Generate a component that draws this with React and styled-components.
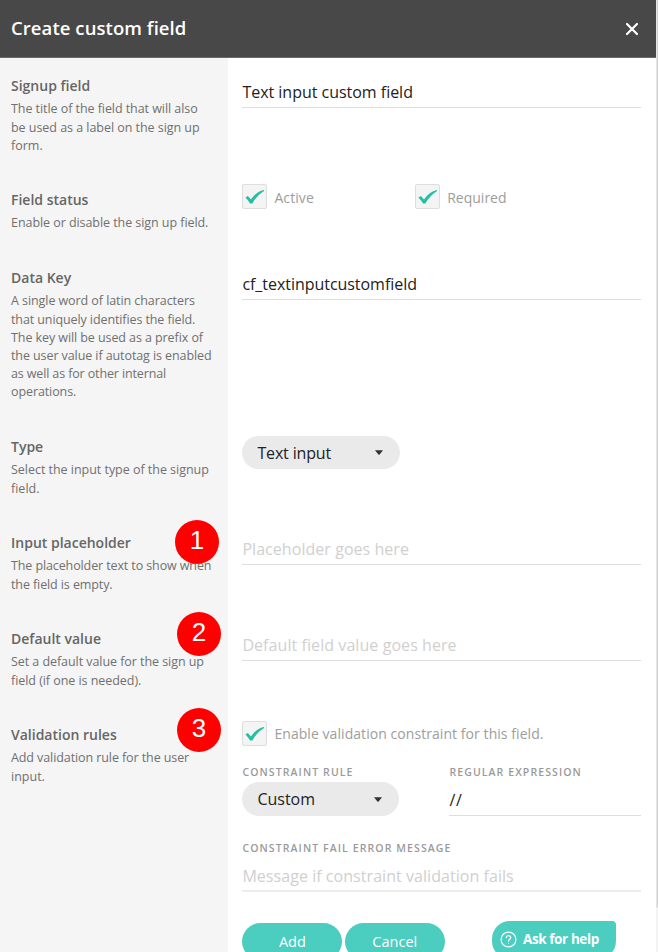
import React from "react";
import styled, { createGlobalStyle } from "styled-components";

const GlobalStyle = createGlobalStyle`
  * { box-sizing: border-box; }
  body { margin: 0; background: #fff; font-family: "Open Sans", "Noto Sans", sans-serif; }
`;

const Page = styled.div`
  width: 658px;
  height: 952px;
  overflow: hidden;
  display: grid;
  grid-template-columns: 656px 2px;
`;

const Panel = styled.main`
  height: 952px;
  overflow: hidden;
  background: linear-gradient(to right, #f5f5f5 228px, #fff 228px);
`;

const ScrollTrack = styled.div`
  height: 952px;
  background: #f3f3f3;
`;

const ScrollThumb = styled.div`
  height: 908px;
  background: #d2d2d2;
  border-left: 1px solid #e4e4e4;
  border-radius: 0 0 0 2px;
`;

const Header = styled.header`
  height: 58px;
  padding: 0 17px 0 11px;
  display: flex;
  align-items: center;
  justify-content: space-between;
  background: #484848;
  border-bottom: 1px solid #6c6666;
`;

const Title = styled.h1`
  margin: 0;
  padding-bottom: 2px;
  color: #fff;
  font-size: 18.5px;
  font-weight: 600;
  line-height: 24px;
  letter-spacing: 0.07px;
`;

const CloseButton = styled.button`
  display: flex;
  padding: 0;
  border: 0;
  background: none;
`;

const Row = styled.section`
  height: ${(p) => p.$height}px;
  display: grid;
  grid-template-columns: 228px 1fr;
`;

const Info = styled.div`
  position: relative;
  padding: 16px 0 0 11px;
`;

const InfoTitle = styled.h2`
  margin: 0 0 2.3px;
  color: #666;
  font-size: 14px;
  font-weight: 600;
  line-height: 24px;
`;

const InfoLine = styled.div`
  color: #707070;
  font-size: 12.5px;
  line-height: 18.2px;
  letter-spacing: ${(p) => p.$track || 0}px;
  white-space: nowrap;
`;

const Badge = styled.div`
  position: absolute;
  left: ${(p) => p.$left}px;
  top: ${(p) => p.$top}px;
  width: 44px;
  height: 44px;
  padding-bottom: 3px;
  display: flex;
  align-items: center;
  justify-content: center;
  border-radius: 50%;
  background: #fe0000;
  color: #fff;
  font: 26px/41px "Liberation Sans", Arial, sans-serif;
`;

const Content = styled.div`
  padding: ${(p) => p.$top}px 15px 0 14.4px;
`;

const Value = styled.div`
  height: ${(p) => p.$height || 31}px;
  border-bottom: ${(p) => (p.$thick ? "2px solid #ececec" : "1px solid #dedede")};
  color: ${(p) => (p.$muted ? "#d0d0d0" : "#222")};
  font-size: 16px;
  line-height: ${(p) => p.$line || 31}px;
  letter-spacing: ${(p) => p.$track || 0}px;
  white-space: nowrap;
`;

const Checks = styled.div`
  display: grid;
  grid-template-columns: 172.8px 1fr;
`;

const CheckLabel = styled.div`
  display: flex;
  align-items: center;
  gap: 7px;
  color: #9d9d9d;
  font-size: 14px;
  line-height: 25px;
  letter-spacing: ${(p) => p.$track || 0}px;
  white-space: nowrap;
`;

const CheckText = styled.span`
  padding-top: 2px;
  line-height: 23px;
`;

const Box = styled.span`
  width: 25px;
  height: 25px;
  flex: none;
  display: flex;
  border: 1px solid #dedede;
  border-radius: 2px;
  background: #f4f4f4;
`;

const Select = styled.div`
  width: ${(p) => p.$width}px;
  height: ${(p) => p.$height}px;
  padding: 0 17.5px 0 15px;
  display: flex;
  align-items: center;
  justify-content: space-between;
  border-radius: 17px;
  background: #eaeaea;
  color: #222;
  font-size: 16px;
  letter-spacing: ${(p) => p.$track || 0}px;
`;

const Constraint = styled.div`
  display: grid;
  grid-template-columns: 207px 1fr;
  margin-top: 19px;
`;

const Caption = styled.div`
  height: 17px;
  color: #9a9a9a;
  font-size: 10.5px;
  font-weight: 600;
  line-height: 15px;
  letter-spacing: 1.1px;
  white-space: nowrap;
`;

const Message = styled.div`
  margin-top: 25px;
`;

const Actions = styled.div`
  display: flex;
  align-items: flex-start;
  margin-top: 29px;
`;

const Button = styled.button`
  width: 100px;
  height: 37px;
  margin: 2px 2.4px 0 0;
  padding: 0;
  border: 0;
  border-radius: 18.5px;
  background: #4bcdc0;
  color: #fff;
  font: 14.5px/37px "Open Sans", sans-serif;
`;

const HelpButton = styled.button`
  width: 124px;
  height: 38px;
  margin-left: 44.8px;
  padding: 0 0 2px 8px;
  display: flex;
  align-items: center;
  gap: 6px;
  border: 0;
  border-radius: 18px 4px 18px 18px;
  background: #4bcdc0;
  color: #fff;
  font: 700 13.5px/36px "Open Sans", sans-serif;
  letter-spacing: -0.4px;
  white-space: nowrap;
`;

const Check = () => (
  <Box>
    <svg width="23" height="23" viewBox="0 0 23 23">
      <path d="M2.5 12.4 L4.8 11 L8 14.4 C11.6 9.2 15.6 6.2 20.9 5 L21.1 5.9 C16.2 8.8 12.2 13.2 9.4 18.4 L7.1 18.5 C5.6 16 4.1 14 2.5 12.4Z" fill="#25bf9f" />
    </svg>
  </Box>
);

const Caret = () => (
  <svg width="8" height="5" viewBox="0 0 8 5">
    <path d="M0 0.2H8L4.6 4.4Q4 4.9 3.4 4.4Z" fill="#333" />
  </svg>
);

const InfoBlock = ({ title, lines, badge }) => (
  <Info>
    <InfoTitle>{title}</InfoTitle>
    {lines.map(([text, track]) => (
      <InfoLine key={text} $track={track}>{text}</InfoLine>
    ))}
    {badge && <Badge $left={badge.left} $top={badge.top}>{badge.label}</Badge>}
  </Info>
);

export default function App() {
  return (
    <>
      <GlobalStyle />
      <Page>
        <Panel>
          <Header>
            <Title>Create custom field</Title>
            <CloseButton aria-label="Close">
              <svg width="14" height="14" viewBox="0 0 14 14" stroke="#fff" strokeWidth="2.2" strokeLinecap="round">
                <path d="M2 2L12 12M12 2L2 12" />
              </svg>
            </CloseButton>
          </Header>

          <Row $height={114}>
            <InfoBlock title="Signup field" lines={[["The title of the field that will also", -0.06], ["be used as a label on the sign up", -0.04], ["form."]]} />
            <Content $top={19}><Value $track={-0.02}>Text input custom field</Value></Content>
          </Row>

          <Row $height={78}>
            <InfoBlock title="Field status" lines={[["Enable or disable the sign up field.", -0.06]]} />
            <Content $top={12}>
              <Checks>
                <CheckLabel $track={0.1}><Check /><CheckText>Active</CheckText></CheckLabel>
                <CheckLabel><Check /><CheckText>Required</CheckText></CheckLabel>
              </Checks>
            </Content>
          </Row>

          <Row $height={169}>
            <InfoBlock title="Data Key" lines={[["A single word of latin characters", -0.07], ["that uniquely identifies the field.", -0.1], ["The key will be used as a prefix of", -0.08], ["the user value if autotag is enabled", -0.09], ["as well as for other internal", -0.13], ["operations.", -0.1]]} />
            <Content $top={19}><Value $track={-0.04}>cf_textinputcustomfield</Value></Content>
          </Row>

          <Row $height={96}>
            <InfoBlock title="Type" lines={[["Select the input type of the signup", -0.03], ["field."]]} />
            <Content $top={17}><Select $width={158} $height={33} $track={-0.15}>Text input<Caret /></Select></Content>
          </Row>

          <Row $height={96}>
            <InfoBlock title="Input placeholder" lines={[["The placeholder text to show when", -0.11], ["the field is empty.", -0.1]]} badge={{ left: 175, top: 5, label: "1" }} />
            <Content $top={19}><Value $muted $track={0.05}>Placeholder goes here</Value></Content>
          </Row>

          <Row $height={96}>
            <InfoBlock title="Default value" lines={[["Set a default value for the sign up", -0.06], ["field (if one is needed).", -0.05]]} badge={{ left: 177, top: 1, label: "2" }} />
            <Content $top={19}><Value $muted $track={0.07}>Default field value goes here</Value></Content>
          </Row>

          <Row $height={245}>
            <InfoBlock title="Validation rules" lines={[["Add validation rule for the user", -0.09], ["input."]]} badge={{ left: 177, top: 1, label: "3" }} />
            <Content $top={14}>
              <CheckLabel $track={0.06}><Check />Enable validation constraint for this field.</CheckLabel>
              <Constraint>
                <div>
                  <Caption>CONSTRAINT RULE</Caption>
                  <Select $width={157} $height={34}>Custom<Caret /></Select>
                </div>
                <div>
                  <Caption>REGULAR EXPRESSION</Caption>
                  <Value $height={34} $line={36} $track={0.8}>//</Value>
                </div>
              </Constraint>
              <Message>
                <Caption>CONSTRAINT FAIL ERROR MESSAGE</Caption>
                <Value $muted $thick $height={34} $line={36} $track={0.05}>Message if constraint validation fails</Value>
              </Message>
              <Actions>
                <Button>Add</Button>
                <Button>Cancel</Button>
                <HelpButton>
                  <svg width="17" height="17" viewBox="0 0 17 17" fill="none" stroke="#fff" strokeWidth="1.2" strokeLinecap="round">
                    <circle cx="8.5" cy="8.5" r="7.4" />
                    <path d="M6.3 6.7C6.3 3.9 10.7 4 10.7 6.7C10.7 8.2 8.5 8.3 8.5 10.2M8.5 12.3V12.5" />
                  </svg>
                  Ask for help
                </HelpButton>
              </Actions>
            </Content>
          </Row>
        </Panel>
        <ScrollTrack><ScrollThumb /></ScrollTrack>
      </Page>
    </>
  );
}
